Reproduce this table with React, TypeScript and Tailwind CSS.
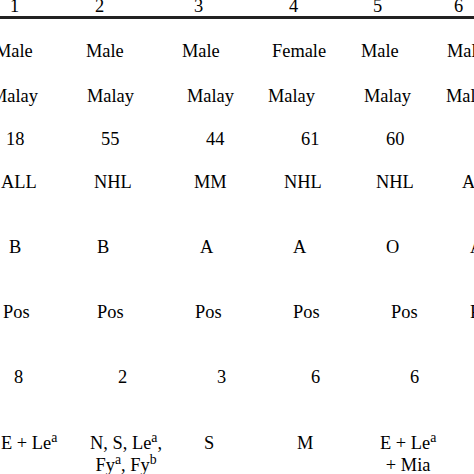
import React from "react";

// cropped patient table: columns 1-6, col 1 and 6 cut at the page edge
const cols = "grid grid-cols-[96px_94px_84px_94px_84px_96px] whitespace-nowrap";

export default function App() {
  return (
    <div className="w-[474px] h-[474px] overflow-hidden bg-white text-black text-[18.4px] leading-[22px] font-['Liberation_Serif','Times_New_Roman',serif]">
      <div className="ml-[-12px] mt-[-4px] w-[486px]">
        {/* header */}
        <div className={`${cols} h-[20px] leading-[21px]`}>
          <div className="pl-[22px]">1</div>
          <div className="pl-[11px]">2</div>
          <div className="pl-[16px]">3</div>
          <div className="pl-[27px]">4</div>
          <div className="pl-[17px]">5</div>
          <div className="pl-[14px]">6</div>
        </div>
        <div className="h-[3px] w-full bg-[#222]" />

        {/* sex */}
        <div className={`${cols} mt-[21px]`}>
          <div className="pl-[7px]">Male</div>
          <div className="pl-[2px]">Male</div>
          <div className="pl-[4px]">Male</div>
          <div className="pl-[10px]">Female</div>
          <div className="pl-[5px]">Male</div>
          <div className="pl-[7px]">Male</div>
        </div>

        {/* race */}
        <div className={`${cols} mt-[23px]`}>
          <div className="pl-[3px]">Malay</div>
          <div className="pl-[3px]">Malay</div>
          <div className="pl-[9px]">Malay</div>
          <div className="pl-[6px]">Malay</div>
          <div className="pl-[8px]">Malay</div>
          <div className="pl-[6px]">Malay</div>
        </div>

        {/* age */}
        <div className={`${cols} mt-[21px]`}>
          <div className="pl-[18px]">18</div>
          <div className="pl-[17px]">55</div>
          <div className="pl-[28px]">44</div>
          <div className="pl-[39px]">61</div>
          <div className="pl-[30px]">60</div>
          <div />
        </div>

        {/* diagnosis */}
        <div className={`${cols} mt-[21px]`}>
          <div className="pl-[13px]">ALL</div>
          <div className="pl-[10px]">NHL</div>
          <div className="pl-[16px]">MM</div>
          <div className="pl-[22px]">NHL</div>
          <div className="pl-[20px]">NHL</div>
          <div className="pl-[22px]">ALL</div>
        </div>

        {/* blood group */}
        <div className={`${cols} mt-[43px]`}>
          <div className="pl-[21px]">B</div>
          <div className="pl-[13px]">B</div>
          <div className="pl-[22px]">A</div>
          <div className="pl-[31px]">A</div>
          <div className="pl-[30px]">O</div>
          <div className="pl-[30px]">A</div>
        </div>

        {/* DAT */}
        <div className={`${cols} mt-[43px]`}>
          <div className="pl-[15px]">Pos</div>
          <div className="pl-[13px]">Pos</div>
          <div className="pl-[17px]">Pos</div>
          <div className="pl-[31px]">Pos</div>
          <div className="pl-[35px]">Pos</div>
          <div className="pl-[30px]">Pos</div>
        </div>

        {/* units */}
        <div className={`${cols} mt-[43px]`}>
          <div className="pl-[26px]">8</div>
          <div className="pl-[34px]">2</div>
          <div className="pl-[39px]">3</div>
          <div className="pl-[49px]">6</div>
          <div className="pl-[54px]">6</div>
          <div />
        </div>

        {/* antibodies */}
        <div className={`${cols} mt-[44px]`}>
          <div className="pl-[13px]">
            E + Le<sup>a</sup>
          </div>
          <div className="pl-[6px]">
            <div className="inline-block text-center">
              N, S, Le<sup>a</sup>,
              <br />
              Fy<sup>a</sup>, Fy<sup>b</sup>
            </div>
          </div>
          <div className="pl-[26px]">S</div>
          <div className="pl-[35px]">M</div>
          <div className="pl-[24px]">
            <div className="inline-block text-center">
              E + Le<sup>a</sup>
              <br />+ Mia
            </div>
          </div>
          <div />
        </div>
      </div>
    </div>
  );
}
